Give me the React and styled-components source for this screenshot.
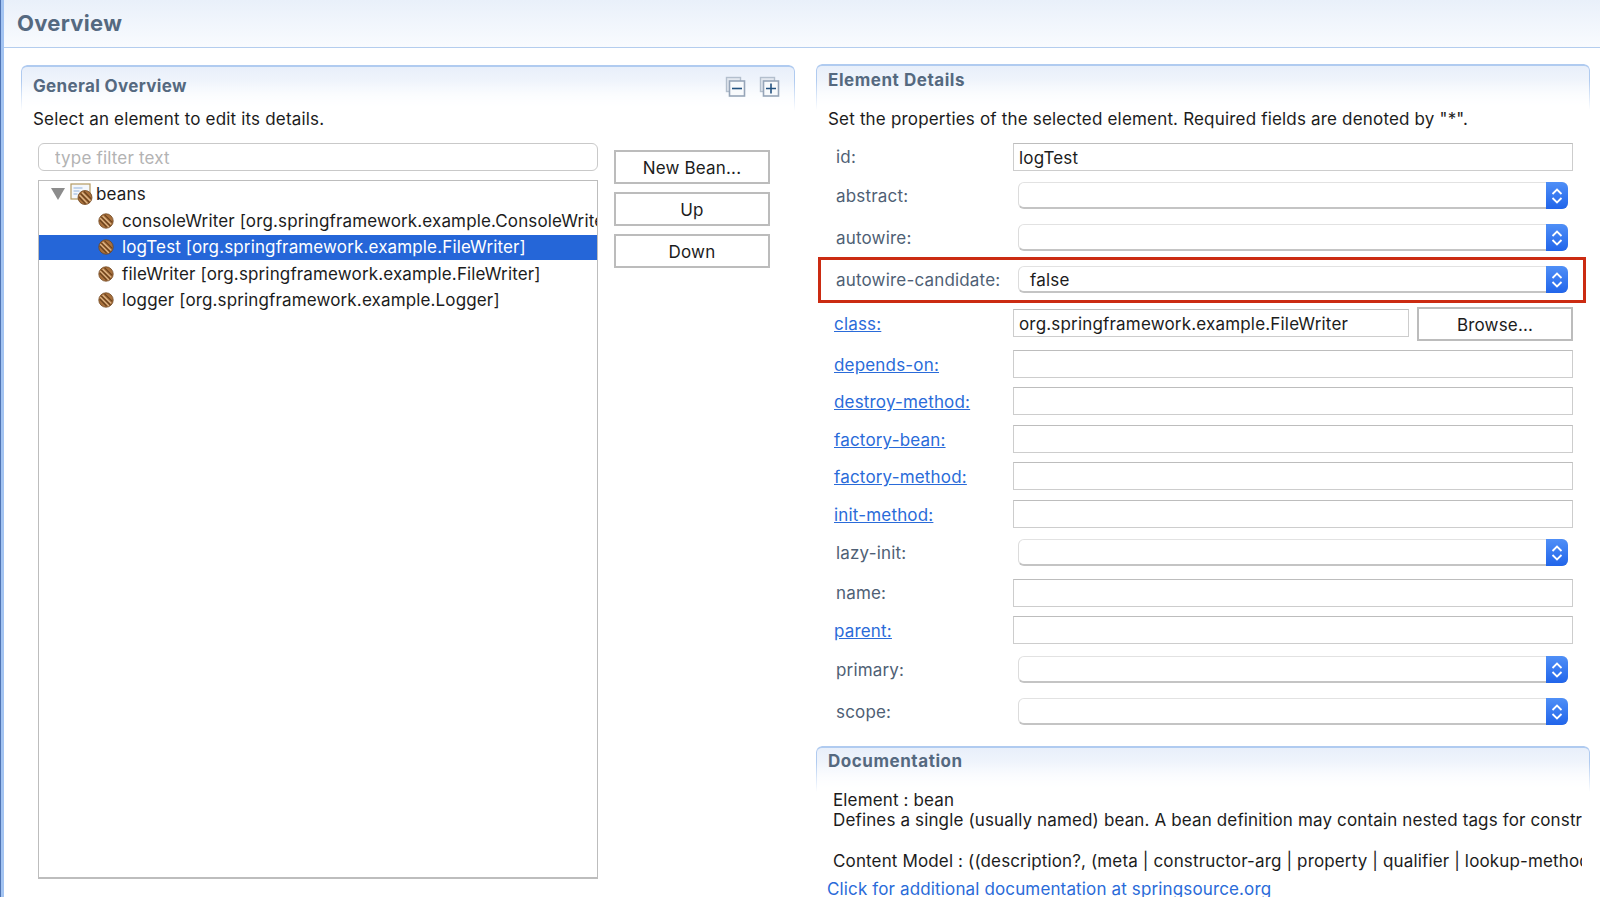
import styled, { createGlobalStyle } from 'styled-components';

const GlobalStyle = createGlobalStyle`
  html, body {
    margin: 0;
    height: 100%;
    overflow: hidden;
    background: #fff;
  }
  * { box-sizing: border-box; }
`;

// ── Page ───────────────────────────────────────────────────
const Page = styled.div`
  width: 1600px;
  height: 897px;
  overflow: hidden;
  padding-left: 4px;
  background: linear-gradient(90deg, #4f74b4 1.5px, #a3c4f2 1.5px, #a3c4f2 4px, #fff 4px);
  font-family: Inter, "Noto Sans", sans-serif;
  font-size: 17px;
  letter-spacing: 0.18px;
  color: #1c1c1c;
`;

const PageHeader = styled.header`
  height: 48px;
  padding: 5px 0 0 13px;
  background: linear-gradient(#e9f0fa, #f9fbfe);
  border-bottom: 1px solid #b4cdee;
  font-size: 22px;
  line-height: 36px;
  font-weight: 700;
  letter-spacing: 0.3px;
  color: #556980;
`;

const Columns = styled.div`
  display: flex;
  gap: 21px;
  padding: 16px 0 0 17px;
`;

const Column = styled.div`
  display: flex;
  flex-direction: column;
  width: 774px;
  margin-top: ${(p) => p.$top || 0}px;
`;

// ── Section chrome ─────────────────────────────────────────
const Section = styled.section`
  position: relative;

  &::before {
    content: '';
    position: absolute;
    top: 0;
    left: 0;
    right: 0;
    height: 44px;
    border: 1px solid #b0cbf0;
    border-top-width: 2px;
    border-bottom: none;
    border-radius: 6px 6px 0 0;
    background: linear-gradient(#e8effa, #fff);
    mask-image: linear-gradient(#000 35%, transparent);
  }
`;

const SectionHead = styled.div`
  position: relative;
  display: flex;
  align-items: center;
  justify-content: space-between;
  height: ${(p) => p.$height}px;
  padding: 0 15px 0 12px;
`;

const SectionTitle = styled.h2`
  margin: 0;
  font-size: 17px;
  font-weight: 700;
  letter-spacing: ${(p) => p.$tracking || 0.55}px;
  color: #556980;
`;

const HeadTools = styled.div`
  display: flex;
  gap: 13px;
`;

const Intro = styled.p`
  position: relative;
  margin: ${(p) => p.$top || 0}px 0 0;
  padding-left: 12px;
  line-height: 24px;
  white-space: nowrap;
`;

// ── Left panel ─────────────────────────────────────────────
const OverviewBody = styled.div`
  display: flex;
  gap: 16px;
  margin: 12px 0 0 17px;
`;

const TreeColumn = styled.div`
  display: flex;
  flex-direction: column;
  width: 560px;
`;

const FilterInput = styled.input`
  width: 100%;
  height: 28px;
  padding: 2px 16px 0;
  border: 1px solid #c9c9c9;
  border-radius: 6px;
  outline: none;
  font: inherit;
  letter-spacing: inherit;
  color: #1c1c1c;

  &::placeholder {
    color: #b3b3b3;
  }
`;

const Tree = styled.div`
  height: 699px;
  margin-top: 9px;
  border: 1px solid #bdbdbd;
  border-bottom-width: 2px;
  overflow: hidden;
  letter-spacing: 0.14px;
`;

const TreeRow = styled.div`
  display: flex;
  align-items: center;
  gap: ${(p) => (p.$root ? 2 : 8)}px;
  height: ${(p) => (p.$selected ? 25 : 26.5)}px;
  margin: ${(p) => (p.$selected ? '0.75px 0' : 0)};
  padding-left: ${(p) => (p.$root ? 12 : 59)}px;
  background: ${(p) => (p.$selected ? '#2566d8' : 'transparent')};
  color: ${(p) => (p.$selected ? '#fff' : '#1c1c1c')};
  white-space: nowrap;
`;

const Twisty = styled.span`
  width: 0;
  height: 0;
  margin-right: 3px;
  border-left: 7px solid transparent;
  border-right: 7px solid transparent;
  border-top: 12px solid #8c8c8c;
`;

const ButtonColumn = styled.div`
  display: flex;
  flex-direction: column;
  gap: 8px;
  width: 156px;
  padding-top: 7px;
`;

const PushButton = styled.button`
  flex: none;
  width: 156px;
  height: 34px;
  margin-top: ${(p) => p.$top || 0}px;
  margin-left: ${(p) => p.$left || 0}px;
  padding: 1px 0 0;
  border: 2px solid #bcbcbc;
  border-radius: 0;
  background: #fff;
  font: inherit;
  letter-spacing: inherit;
  color: #1c1c1c;
`;

// ── Form ───────────────────────────────────────────────────
const Form = styled.div`
  display: flex;
  flex-direction: column;
  margin-top: 12px;
  padding-left: 20px;
`;

const Row = styled.div`
  position: relative;
  display: flex;
  height: ${(p) => p.$height}px;
`;

const Label = styled.label`
  flex: none;
  width: 177px;
  height: 28px;
  line-height: 28px;
  color: #4f5f75;
  white-space: nowrap;
`;

const LinkLabel = styled.a`
  flex: none;
  width: 179px;
  height: 28px;
  margin-left: -2px;
  padding-top: 1px;
  line-height: 28px;
  color: #2a6bd9;
  text-decoration: underline;
  white-space: nowrap;
`;

const TextField = styled.input`
  flex: none;
  width: ${(p) => p.$width || 560}px;
  height: 28px;
  padding: 2px 5px 0;
  border: 1px solid #cdcdcd;
  border-top-color: #bdbdbd;
  border-radius: 0;
  outline: none;
  font: inherit;
  letter-spacing: inherit;
  color: #1c1c1c;
`;

const SelectBox = styled.div`
  display: flex;
  justify-content: space-between;
  width: 550px;
  height: 27px;
  margin-left: 5px;
  padding-left: 11px;
  border-top: 1px solid #e2e2e2;
  border-left: 1px solid #dcdcdc;
  border-bottom: 2px solid #c4c4c4;
  border-radius: 6px;
  line-height: 26px;
`;

const SelectArrows = styled.span`
  display: flex;
  align-items: center;
  justify-content: center;
  width: 22px;
  height: 27px;
  margin-top: -1px;
  border-radius: 0 6px 6px 0;
  background: linear-gradient(#4f8ff7, #2165ea);
`;

const Highlight = styled.div`
  position: absolute;
  top: -9px;
  left: -18px;
  width: 768px;
  height: 46px;
  border: 3px solid #cb2b12;
  pointer-events: none;
`;

// ── Documentation ──────────────────────────────────────────
const DocBody = styled.div`
  position: relative;
  margin: 14px 8px 0 11px;
  padding-left: 6px;
  overflow: hidden;
  line-height: 20px;
  white-space: nowrap;
  letter-spacing: 0.14px;
`;

const DocLine = styled.div`
  min-height: 20px;
`;

const DocGap = styled.div`
  height: ${(p) => p.$height}px;
`;

const DocLink = styled.a`
  display: block;
  margin-left: -6px;
  color: #2a6bd9;
`;

// ── Drawings ───────────────────────────────────────────────
function Bean() {
  return (
    <svg width="16" height="16" viewBox="0 0 16 16" style={{ flex: 'none' }}>
      <circle cx="8" cy="8" r="7.2" fill="#a8703c" stroke="#70461f" strokeWidth="0.8" />
      <path d="M3.2 3.8 L12.4 13 M1.8 7 L8.6 14 M6.6 1.8 L14.2 9.4" stroke="#6b421d" strokeWidth="1.2" fill="none" />
      <path d="M4.6 3 L13.2 11.4 M2.2 5.2 L10.8 13.8" stroke="#e0b98b" strokeWidth="1.1" fill="none" />
    </svg>
  );
}

function BeansIcon() {
  return (
    <svg width="24" height="22" viewBox="0 0 24 22" style={{ flex: 'none' }}>
      <rect x="1" y="1" width="19" height="15" fill="#f4f7fb" stroke="#b49a62" strokeWidth="1.2" />
      <path d="M3.5 5h9M3.5 8h6M3.5 11h4" stroke="#8fb2dc" strokeWidth="1.2" />
      <circle cx="15" cy="14.5" r="7" fill="#a8703c" stroke="#70461f" strokeWidth="0.8" />
      <path d="M10.5 10.5 L19.5 19.5 M9 14 L15.5 20.8 M14 8.5 L21.2 15.8" stroke="#6b421d" strokeWidth="1.2" fill="none" />
      <path d="M12 9.5 L20.5 18 M9.5 12 L17.5 20.3" stroke="#e0b98b" strokeWidth="1.1" fill="none" />
    </svg>
  );
}

function TreeToggle({ plus }) {
  return (
    <svg width="21" height="21" viewBox="0 0 21 21">
      <rect x="1.5" y="1.5" width="14" height="14" fill="#e4e9f0" stroke="#b3bfcd" strokeWidth="1.4" />
      <rect x="4.5" y="5" width="15" height="15" fill="#f8fafc" stroke="#96a5b8" strokeWidth="1.6" />
      <path d={plus ? 'M7 12.5h10M12 7.5v10' : 'M7 12.5h10'} stroke="#23527f" strokeWidth="1.6" />
    </svg>
  );
}

function UpDown() {
  return (
    <svg width="14" height="18" viewBox="0 0 14 18" fill="none" stroke="#fff" strokeWidth="1.8">
      <path d="M2.5 7 L7 2.5 L11.5 7" />
      <path d="M2.5 11 L7 15.5 L11.5 11" />
    </svg>
  );
}

// ── Data ───────────────────────────────────────────────────
const beans = [
  { name: 'consoleWriter [org.springframework.example.ConsoleWriter]' },
  { name: 'logTest [org.springframework.example.FileWriter]', selected: true },
  { name: 'fileWriter [org.springframework.example.FileWriter]' },
  { name: 'logger [org.springframework.example.Logger]' },
];

const fields = [
  { label: 'id:', kind: 'text', value: 'logTest', height: 39 },
  { label: 'abstract:', kind: 'select', height: 42 },
  { label: 'autowire:', kind: 'select', height: 42 },
  { label: 'autowire-candidate:', kind: 'select', value: 'false', height: 43, marked: true },
  { label: 'class:', link: true, kind: 'browse', value: 'org.springframework.example.FileWriter', height: 41 },
  { label: 'depends-on:', link: true, kind: 'text', height: 37 },
  { label: 'destroy-method:', link: true, kind: 'text', height: 38 },
  { label: 'factory-bean:', link: true, kind: 'text', height: 37 },
  { label: 'factory-method:', link: true, kind: 'text', height: 38 },
  { label: 'init-method:', link: true, kind: 'text', height: 39 },
  { label: 'lazy-init:', kind: 'select', height: 40 },
  { label: 'name:', kind: 'text', height: 37 },
  { label: 'parent:', link: true, kind: 'text', height: 40 },
  { label: 'primary:', kind: 'select', height: 42 },
  { label: 'scope:', kind: 'select', height: 48 },
];

// ── Components ─────────────────────────────────────────────
function Field({ field }) {
  if (field.kind === 'select') {
    return (
      <SelectBox>
        <span>{field.value}</span>
        <SelectArrows><UpDown /></SelectArrows>
      </SelectBox>
    );
  }
  if (field.kind === 'browse') {
    return (
      <>
        <TextField $width={396} readOnly value={field.value} />
        <PushButton $left={8} $top={-2}>Browse...</PushButton>
      </>
    );
  }
  return <TextField readOnly value={field.value || ''} />;
}

export default function App() {
  return (
    <Page>
      <GlobalStyle />
      <PageHeader>Overview</PageHeader>

      <Columns>
        <Column $top={1}>
          <Section>
            <SectionHead $height={42}>
              <SectionTitle $tracking={0.35}>General Overview</SectionTitle>
              <HeadTools>
                <TreeToggle />
                <TreeToggle plus />
              </HeadTools>
            </SectionHead>
            <Intro>Select an element to edit its details.</Intro>
            <OverviewBody>
              <TreeColumn>
                <FilterInput placeholder="type filter text" readOnly />
                <Tree>
                  <TreeRow $root>
                    <Twisty />
                    <BeansIcon />
                    <span>beans</span>
                  </TreeRow>
                  {beans.map((b) => (
                    <TreeRow key={b.name} $selected={b.selected}>
                      <Bean />
                      <span>{b.name}</span>
                    </TreeRow>
                  ))}
                </Tree>
              </TreeColumn>
              <ButtonColumn>
                <PushButton>New Bean...</PushButton>
                <PushButton>Up</PushButton>
                <PushButton>Down</PushButton>
              </ButtonColumn>
            </OverviewBody>
          </Section>
        </Column>

        <Column>
          <Section>
            <SectionHead $height={32}>
              <SectionTitle>Element Details</SectionTitle>
            </SectionHead>
            <Intro $top={11}>Set the properties of the selected element. Required fields are denoted by "*".</Intro>
            <Form>
              {fields.map((f) => (
                <Row key={f.label} $height={f.height}>
                  {f.link ? <LinkLabel>{f.label}</LinkLabel> : <Label>{f.label}</Label>}
                  <Field field={f} />
                  {f.marked && <Highlight />}
                </Row>
              ))}
            </Form>
          </Section>

          <Section>
            <SectionHead $height={30}>
              <SectionTitle>Documentation</SectionTitle>
            </SectionHead>
            <DocBody>
              <DocLine>Element : bean</DocLine>
              <DocLine>Defines a single (usually named) bean. A bean definition may contain nested tags for constructor arguments</DocLine>
              <DocGap $height={21} />
              <DocLine>Content Model : ((description?, (meta | constructor-arg | property | qualifier | lookup-method | replaced-method)*))</DocLine>
              <DocGap $height={8} />
              <DocLink>Click for additional documentation at springsource.org</DocLink>
            </DocBody>
          </Section>
        </Column>
      </Columns>
    </Page>
  );
}
